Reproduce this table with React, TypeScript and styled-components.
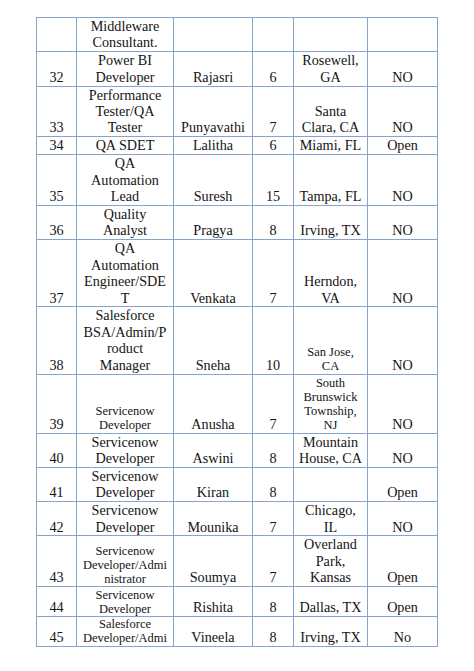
import styled, { createGlobalStyle } from "styled-components";

const GlobalStyle = createGlobalStyle`
  html, body {
    margin: 0;
    padding: 0;
    background: #ffffff;
    font-family: "Liberation Serif", "Times New Roman", Times, serif;
  }
`;

const Page = styled.div`
  width: 474px;
  min-height: 671px;
  padding-top: 17px;
  box-sizing: border-box;
  background: #ffffff;
`;

const Table = styled.table`
  width: 401px;
  margin: 0 auto;
  border-collapse: collapse;
  table-layout: fixed;
  border: 1px solid #89a4cc;
`;

const Col = styled.col<{ $w: number }>`
  width: ${(p) => p.$w}px;
`;

const Row = styled.tr<{ $h: number }>`
  height: ${(p) => p.$h - 1}px;
`;

const Cell = styled.td<{ $small?: boolean }>`
  border: 1px solid #89a4cc;
  padding: 0 0 ${(p) => (p.$small ? "0" : "0.5px")};
  text-align: center;
  vertical-align: bottom;
  font-family: "Liberation Serif", "Times New Roman", Times, serif;
  font-size: ${(p) => (p.$small ? "12.5px" : "14.2px")};
  line-height: ${(p) => (p.$small ? "14.2px" : "16.4px")};
  color: #141414;
  white-space: nowrap;
  overflow: hidden;
`;

interface Entry {
  no: string;
  role: string[];
  name: string;
  years: string;
  place: string[];
  status: string;
  h: number;
  smallRole?: boolean;
  smallPlace?: boolean;
}

const widths = [40, 97, 79, 41, 74, 70];

const rows: Entry[] = [
  { no: "", role: ["Middleware", "Consultant."], name: "", years: "", place: [], status: "", h: 35 },
  { no: "32", role: ["Power BI", "Developer"], name: "Rajasri", years: "6", place: ["Rosewell,", "GA"], status: "NO", h: 34 },
  { no: "33", role: ["Performance", "Tester/QA", "Tester"], name: "Punyavathi", years: "7", place: ["Santa", "Clara, CA"], status: "NO", h: 51 },
  { no: "34", role: ["QA SDET"], name: "Lalitha", years: "6", place: ["Miami, FL"], status: "Open", h: 17 },
  { no: "35", role: ["QA", "Automation", "Lead"], name: "Suresh", years: "15", place: ["Tampa, FL"], status: "NO", h: 51 },
  { no: "36", role: ["Quality", "Analyst"], name: "Pragya", years: "8", place: ["Irving, TX"], status: "NO", h: 34 },
  { no: "37", role: ["QA", "Automation", "Engineer/SDE", "T"], name: "Venkata", years: "7", place: ["Herndon,", "VA"], status: "NO", h: 68 },
  { no: "38", role: ["Salesforce", "BSA/Admin/P", "roduct", "Manager"], name: "Sneha", years: "10", place: ["San Jose,", "CA"], status: "NO", h: 67, smallPlace: true },
  { no: "39", role: ["Servicenow", "Developer"], name: "Anusha", years: "7", place: ["South", "Brunswick", "Township,", "NJ"], status: "NO", h: 60, smallRole: true, smallPlace: true },
  { no: "40", role: ["Servicenow", "Developer"], name: "Aswini", years: "8", place: ["Mountain", "House, CA"], status: "NO", h: 34 },
  { no: "41", role: ["Servicenow", "Developer"], name: "Kiran", years: "8", place: [], status: "Open", h: 34 },
  { no: "42", role: ["Servicenow", "Developer"], name: "Mounika", years: "7", place: ["Chicago,", "IL"], status: "NO", h: 34 },
  { no: "43", role: ["Servicenow", "Developer/Admi", "nistrator"], name: "Soumya", years: "7", place: ["Overland", "Park,", "Kansas"], status: "Open", h: 51, smallRole: true },
  { no: "44", role: ["Servicenow", "Developer"], name: "Rishita", years: "8", place: ["Dallas, TX"], status: "Open", h: 31, smallRole: true },
  { no: "45", role: ["Salesforce", "Developer/Admi"], name: "Vineela", years: "8", place: ["Irving, TX"], status: "No", h: 30, smallRole: true },
];

function Lines({ items }: { items: string[] }) {
  return (
    <>
      {items.map((line, i) => (
        <span key={i}>
          {i > 0 && <br />}
          {line}
        </span>
      ))}
    </>
  );
}

export default function App() {
  return (
    <>
      <GlobalStyle />
      <Page>
        <Table>
          <colgroup>
            {widths.map((w, i) => (
              <Col key={i} $w={w} />
            ))}
          </colgroup>
          <tbody>
            {rows.map((r, i) => (
              <Row key={i} $h={r.h}>
                <Cell>{r.no}</Cell>
                <Cell $small={r.smallRole}>
                  <Lines items={r.role} />
                </Cell>
                <Cell>{r.name}</Cell>
                <Cell>{r.years}</Cell>
                <Cell $small={r.smallPlace}>
                  <Lines items={r.place} />
                </Cell>
                <Cell>{r.status}</Cell>
              </Row>
            ))}
          </tbody>
        </Table>
      </Page>
    </>
  );
}
